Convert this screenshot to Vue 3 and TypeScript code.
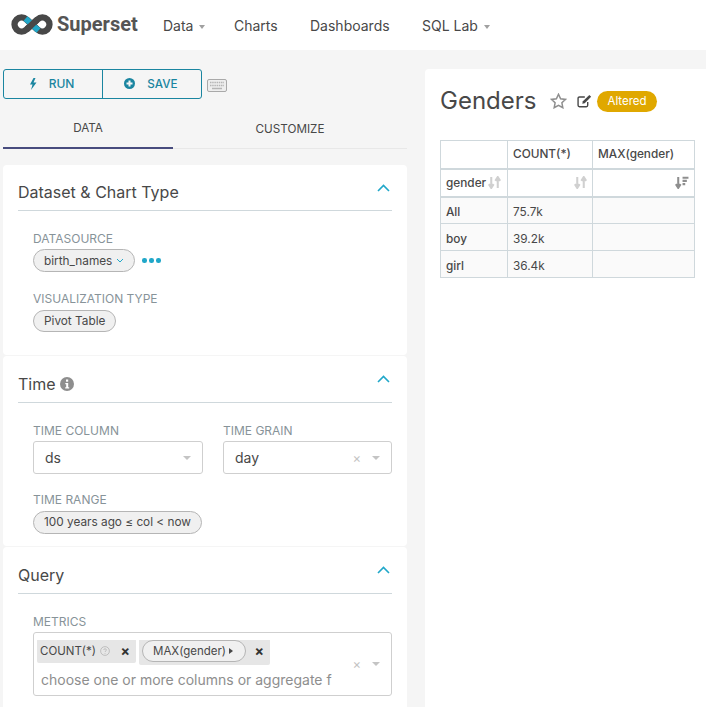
<template>
  <div class="page">
    <header class="navbar">
      <div class="brand">
        <svg class="brand__logo" width="42" height="21" viewBox="0 0 42 21">
          <path d="M21 10.500L15.500 5.500A7 7 0 1 0 15.500 15.500L21 10.500L26.500 5.500A7 7 0 1 1 26.500 15.500z" fill="none" stroke="#484848" stroke-width="6.500" />
          <path d="M14.500 4.500L19 8.600M23 12.400L27.500 16.500" fill="none" stroke="#20a7c9" stroke-width="6" />
          <path d="M16 15L26 6" fill="none" stroke="#484848" stroke-width="6" />
        </svg>
        <span class="brand__name">Superset</span>
      </div>
      <nav class="nav">
        <span v-for="item in navItems" :key="item.label" class="nav__item" :style="{ width: item.width + 'px' }">
          {{ item.label }}<i v-if="item.caret" class="nav__caret"></i>
        </span>
      </nav>
    </header>

    <main class="explore">
      <section class="controls">
        <div class="toolbar">
          <div class="btn-group">
            <button class="btn btn--run" type="button">
              <svg width="8" height="12" viewBox="0 0 8 12"><path d="M4.500 0L1 6.500h2.500L2 12l5.500-7.500H4.500L6.500 0z" fill="#1a85a0" /></svg>
              RUN
            </button>
            <button class="btn btn--save" type="button">
              <svg width="11" height="11" viewBox="0 0 11 11"><circle cx="5.500" cy="5.500" r="5.500" fill="#1a85a0" /><path d="M5.500 2.500v6M2.500 5.500h6" stroke="#f5f5f5" stroke-width="2" /></svg>
              SAVE
            </button>
          </div>
          <svg class="keyboard" width="20" height="13" viewBox="0 0 20 13">
            <rect x="0.500" y="0.500" width="19" height="12" rx="1.500" fill="#eee" stroke="#a9a9a9" />
            <path d="M3 3.500h14M3 6.500h14" stroke="#b5b5b5" stroke-width="1.500" stroke-dasharray="1.500 0.700" />
            <path d="M5 9.500h10" stroke="#b5b5b5" stroke-width="1.500" />
          </svg>
        </div>

        <div class="tabs">
          <div class="tab tab--active">DATA</div>
          <div class="tab tab--wide">CUSTOMIZE</div>
        </div>

        <div class="card card--dataset">
          <div class="card__head card__head--first">
            <span class="card__title">Dataset &amp; Chart Type</span>
            <svg class="chevron" width="13" height="8" viewBox="0 0 13 8"><path d="M1 7l5.500-5.500L12 7" fill="none" stroke="#20a7c9" stroke-width="1.600" /></svg>
          </div>
          <div class="card__body">
            <label class="ctl-label">DATASOURCE</label>
            <div class="pill-row">
              <span class="pill pill--source">birth_names
                <svg width="8" height="5" viewBox="0 0 8 5"><path d="M1 1l3 3 3-3" fill="none" stroke="#20a7c9" stroke-width="1" /></svg>
              </span>
              <span class="dots"><i></i><i></i><i></i></span>
            </div>
            <label class="ctl-label ctl-label--next">VISUALIZATION TYPE</label>
            <span class="pill pill--viz">Pivot Table</span>
          </div>
        </div>

        <div class="card card--time">
          <div class="card__head">
            <span class="card__title">Time
              <svg class="info" width="14" height="14" viewBox="0 0 14 14"><circle cx="7" cy="7" r="7" fill="#8e8e8e" /><rect x="6" y="2.500" width="2.200" height="2.200" fill="#fff" /><path d="M5.300 6h2.900v4.200h1v1.200H5.200v-1.200h1V7.200h-.9z" fill="#fff" /></svg>
            </span>
            <svg class="chevron" width="13" height="8" viewBox="0 0 13 8"><path d="M1 7l5.500-5.500L12 7" fill="none" stroke="#20a7c9" stroke-width="1.600" /></svg>
          </div>
          <div class="card__body">
            <div class="grid-2">
              <div>
                <label class="ctl-label">TIME COLUMN</label>
                <div class="select">
                  <span>ds</span>
                  <i class="select__arrow"></i>
                </div>
              </div>
              <div>
                <label class="ctl-label">TIME GRAIN</label>
                <div class="select">
                  <span>day</span>
                  <span class="select__clear">×</span>
                  <i class="select__arrow"></i>
                </div>
              </div>
            </div>
            <label class="ctl-label ctl-label--range">TIME RANGE</label>
            <span class="pill pill--range">100 years ago ≤ col &lt; now</span>
          </div>
        </div>

        <div class="card card--query">
          <div class="card__head">
            <span class="card__title">Query</span>
            <svg class="chevron" width="13" height="8" viewBox="0 0 13 8"><path d="M1 7l5.500-5.500L12 7" fill="none" stroke="#20a7c9" stroke-width="1.600" /></svg>
          </div>
          <div class="card__body">
            <label class="ctl-label">METRICS</label>
            <div class="multi">
              <div class="multi__values">
                <div class="multi__tags">
                  <span class="tag tag--count">COUNT(*)
                    <svg width="10" height="10" viewBox="0 0 10 10"><circle cx="5" cy="5" r="4.400" fill="none" stroke="#b5b5b5" stroke-width="0.800" /><path d="M3.700 4c0-1.700 2.700-1.700 2.700 0 0 1-1.400 1-1.400 2M5 7v.8" fill="none" stroke="#b5b5b5" stroke-width="0.800" /></svg>
                    <b class="tag__x">×</b>
                  </span>
                  <span class="tag tag--max">
                    <span class="tag__pill">MAX(gender)<i class="tag__play"></i></span>
                    <b class="tag__x">×</b>
                  </span>
                </div>
                <div class="multi__placeholder">choose one or more columns or aggregate functions</div>
              </div>
              <span class="select__clear">×</span>
              <i class="select__arrow"></i>
            </div>
          </div>
        </div>
      </section>

      <section class="chart">
        <div class="chart__head">
          <h1 class="chart__title">Genders</h1>
          <svg class="star" width="17" height="16" viewBox="0 0 17 16"><path d="M8.500 1.300l2.100 4.500 4.900.6-3.600 3.400.9 4.900-4.300-2.400-4.300 2.400.9-4.900L1.500 6.400l4.900-.6z" fill="none" stroke="#8e8e8e" stroke-width="1.500" /></svg>
          <svg class="edit" width="15" height="14" viewBox="0 0 14 13">
            <path d="M10 7.500v3a1.300 1.300 0 0 1-1.300 1.300H2.300A1.300 1.300 0 0 1 1 10.500V4a1.300 1.300 0 0 1 1.300-1.300h5" fill="none" stroke="#484848" stroke-width="1.300" />
            <path d="M11.500.8l1.700 1.700-6 6-2.300.6.600-2.300z" fill="#484848" />
          </svg>
          <span class="badge">Altered</span>
        </div>

        <table class="pivot">
          <thead>
            <tr class="pivot__cols">
              <th class="col-a"></th>
              <th class="col-b">COUNT(*)</th>
              <th class="col-c">MAX(gender)</th>
            </tr>
            <tr class="pivot__sort">
              <th>
                <span class="sort-cell">gender
                  <svg width="13" height="13" viewBox="0 0 12 12"><path d="M3 1v9M.8 7.500L3 11l2.200-3.500M9 11V2M6.800 4.500L9 1l2.200 3.500" fill="none" stroke="#d0d0d0" stroke-width="1.900" /></svg>
                </span>
              </th>
              <th>
                <span class="sort-cell sort-cell--end">
                  <svg width="13" height="13" viewBox="0 0 12 12"><path d="M3 1v9M.8 7.500L3 11l2.200-3.500M9 11V2M6.800 4.500L9 1l2.200 3.500" fill="none" stroke="#d0d0d0" stroke-width="1.900" /></svg>
                </span>
              </th>
              <th>
                <span class="sort-cell sort-cell--end">
                  <svg width="14" height="13" viewBox="0 0 13 12"><path d="M3 1v9M.8 7.500L3 11l2.200-3.500" fill="none" stroke="#8e8e8e" stroke-width="1.900" /><path d="M7 1.500h5.500M7 4.500h4M7 7.500h2.500" stroke="#8e8e8e" stroke-width="1.900" /></svg>
                </span>
              </th>
            </tr>
          </thead>
          <tbody>
            <tr v-for="row in rows" :key="row.name">
              <th>{{ row.name }}</th>
              <td>{{ row.count }}</td>
              <td></td>
            </tr>
          </tbody>
        </table>
      </section>
    </main>
  </div>
</template>

<script setup lang="ts">
const navItems = [
  { label: 'Data', width: 71, caret: true },
  { label: 'Charts', width: 76, caret: false },
  { label: 'Dashboards', width: 112, caret: false },
  { label: 'SQL Lab', width: 80, caret: true },
]

const rows = [
  { name: 'All', count: '75.7k' },
  { name: 'boy', count: '39.2k' },
  { name: 'girl', count: '36.4k' },
]
</script>

<style>
html,
body {
  margin: 0;
  background: #f5f5f5;
  overflow: hidden;
}
</style>

<style scoped>
.page {
  height: 707px;
  overflow: hidden;
  font-family: Inter, "Liberation Sans", sans-serif;
  color: #484848;
  background: #f5f5f5;
}

.navbar {
  display: flex;
  align-items: center;
  height: 50px;
  background: #fff;
}

.brand {
  display: flex;
  align-items: center;
  width: 163px;
  margin-bottom: 2px;
  padding-left: 11px;
  box-sizing: border-box;
}

.brand__logo {
  flex-shrink: 0;
}

.brand__name {
  margin-left: 4px;
  font-family: Roboto, sans-serif;
  font-size: 20px;
  font-weight: 700;
  color: #555;
}

.nav {
  display: flex;
}

.nav__item {
  font-size: 14px;
  white-space: nowrap;
}

.nav__caret {
  display: inline-block;
  margin-left: 6px;
  vertical-align: middle;
  border: 3px solid transparent;
  border-top: 4px solid #a0a0a0;
  border-bottom: 0;
}

.explore {
  display: flex;
  align-items: flex-start;
}

.controls {
  width: 404px;
  margin-left: 3px;
  flex-shrink: 0;
}

.toolbar {
  display: flex;
  align-items: center;
  gap: 5px;
  padding-top: 19px;
}

.btn-group {
  display: flex;
  width: 199px;
  height: 30px;
  box-sizing: border-box;
  border: 1px solid #1a85a0;
  border-radius: 3px;
  background: #f5f5f5;
}

.btn {
  display: flex;
  align-items: center;
  justify-content: center;
  height: 100%;
  padding: 0 0 1px;
  border: 0;
  background: none;
  font-family: inherit;
  font-size: 11.700px;
  font-weight: 500;
  color: #1a85a0;
}

.btn--run {
  width: 99px;
  gap: 12px;
  border-right: 1px solid #1a85a0;
  padding-right: 3px;
  font-size: 12px;
}

.btn--save {
  flex: 1;
  gap: 12px;
  padding-right: 2px;
}

.keyboard {
  margin-top: 3px;
}

.tabs {
  display: flex;
  height: 50px;
  border-bottom: 1px solid #e8e8e8;
  box-sizing: border-box;
}

.tab {
  display: flex;
  align-items: center;
  justify-content: center;
  width: 170px;
  height: 50px;
  padding-top: 9px;
  box-sizing: border-box;
  font-size: 11.700px;
  color: #484848;
}

.tab--active {
  border-bottom: 2px solid #484c7e;
}

.tab--wide {
  flex: 1;
}

.card {
  margin-top: 16px;
  padding: 0 15px;
  background: #fff;
  border-radius: 4px;
  box-sizing: border-box;
}

.card--dataset {
  height: 190px;
}

.card--time {
  height: 190px;
  margin-top: 1px;
}

.card--query {
  height: 170px;
  margin-top: 1px;
}

.card__head {
  display: flex;
  align-items: center;
  justify-content: space-between;
  height: 47px;
  padding-top: 9px;
  box-sizing: border-box;
  border-bottom: 1px solid #cfd8dc;
}

.card__head--first {
  height: 46px;
}

.card__title {
  display: flex;
  align-items: center;
  gap: 4px;
  font-size: 16px;
  color: #484848;
}

.chevron {
  margin-right: 2px;
  margin-top: -9px;
}

.card__body {
  padding: 21px 0 0 15px;
}

.ctl-label {
  display: block;
  margin-bottom: 3px;
  font-size: 12px;
  line-height: 14px;
  color: #879399;
}

.ctl-label--next {
  margin-top: 20px;
}

.ctl-label--range {
  margin-top: 19px;
}

.pill-row {
  display: flex;
  align-items: center;
  gap: 7px;
}

.pill {
  display: inline-flex;
  align-items: center;
  gap: 4px;
  height: 22px;
  padding: 0 10px;
  box-sizing: border-box;
  border: 1px solid #b5b5b5;
  border-radius: 12px;
  background: #f0f0f0;
  font-size: 11.800px;
  color: #484848;
}

.pill--source {
  height: 23px;
}

.pill--range {
  height: 23px;
}

.dots {
  display: flex;
  gap: 2.500px;
}

.dots i {
  width: 4.500px;
  height: 4.500px;
  border-radius: 50%;
  background: #20a7c9;
}

.grid-2 {
  display: grid;
  grid-template-columns: 170px 169px;
  gap: 20px;
}

.select {
  display: flex;
  align-items: center;
  height: 33px;
  padding: 0 11px;
  box-sizing: border-box;
  border: 1px solid #cfcfcf;
  border-radius: 3px;
  background: #fff;
  font-size: 14px;
  color: #484848;
}

.select > span:first-child {
  flex: 1;
}

.select__arrow {
  flex-shrink: 0;
  width: 0;
  height: 0;
  margin-left: 11px;
  border: 4.500px solid transparent;
  border-top: 4.500px solid #c4c4c4;
  border-bottom: 0;
}

.select__clear {
  flex-shrink: 0;
  font-size: 13px;
  color: #c4c4c4;
}

.multi {
  display: flex;
  align-items: center;
  width: 359px;
  height: 64px;
  padding: 0 11px 0 3px;
  box-sizing: border-box;
  border: 1px solid #cfcfcf;
  border-radius: 3px;
}

.multi__values {
  flex: 1;
  min-width: 0;
  overflow: hidden;
}

.multi__tags {
  display: flex;
  align-items: center;
  gap: 3px;
  margin-top: -3px;
}

.tag {
  display: inline-flex;
  align-items: center;
  background: #e6e6e6;
  border-radius: 2px;
  font-size: 11.500px;
  color: #484848;
}

.tag--count {
  width: 99px;
  height: 24px;
  padding-left: 3px;
  box-sizing: border-box;
  gap: 4px;
}

.tag--max {
  width: 131px;
  height: 28px;
  padding-left: 3px;
  box-sizing: border-box;
}

.tag__pill {
  display: inline-flex;
  align-items: center;
  width: 104px;
  height: 22px;
  padding-left: 10px;
  box-sizing: border-box;
  border: 1px solid #b5b5b5;
  border-radius: 11px;
  background: #f0f0f0;
}

.tag__play {
  margin-left: 3px;
  border: 3px solid transparent;
  border-left: 4px solid #484848;
  border-right: 0;
}

.tag__x {
  margin-left: auto;
  margin-right: 6px;
  font-size: 14px;
  line-height: 1;
  color: #333;
}

.multi__placeholder {
  width: 291px;
  margin: 6px 0 0 4px;
  overflow: hidden;
  white-space: nowrap;
  font-size: 14px;
  line-height: 18px;
  color: #8e8e8e;
}

.chart {
  flex: 1;
  height: 638px;
  margin: 19px 0 0 18px;
  padding: 0 0 0 15px;
  background: #fff;
  border-radius: 4px 0 0 0;
  box-sizing: border-box;
}

.chart__head {
  display: flex;
  align-items: center;
  height: 64px;
}

.chart__title {
  margin: 0 0 1px;
  font-size: 24px;
  font-weight: 400;
  color: #484848;
}

.star {
  margin-left: 14px;
}

.edit {
  margin-left: 10px;
}

.badge {
  display: inline-flex;
  align-items: center;
  height: 21px;
  margin-left: 5px;
  padding: 0 10px;
  border-radius: 11px;
  background: #e0a800;
  font-size: 11.500px;
  color: #fff;
}

.pivot {
  width: 255px;
  margin-top: 7px;
  table-layout: fixed;
  border-collapse: collapse;
  font-size: 11.800px;
  color: #484848;
}

.pivot th,
.pivot td {
  height: 27px;
  padding: 0 5px 0;
  box-sizing: border-box;
  border: 1px solid #cfd8dc;
  text-align: left;
  font-weight: 500;
}

.pivot td {
  font-weight: 400;
}

.pivot tbody th,
.pivot tbody td {
  padding-top: 3px;
}

.pivot tbody tr {
  background: #fafafa;
}

.pivot__cols th {
  height: 28px;
  padding-bottom: 1px;
  border-bottom-width: 2px;
}

.pivot__sort th {
  height: 28px;
  border-bottom-width: 2px;
}

.col-a {
  width: 67px;
}

.col-b {
  width: 85px;
}

.sort-cell {
  display: flex;
  align-items: center;
  gap: 2px;
}

.sort-cell--end {
  justify-content: flex-end;
}
</style>
